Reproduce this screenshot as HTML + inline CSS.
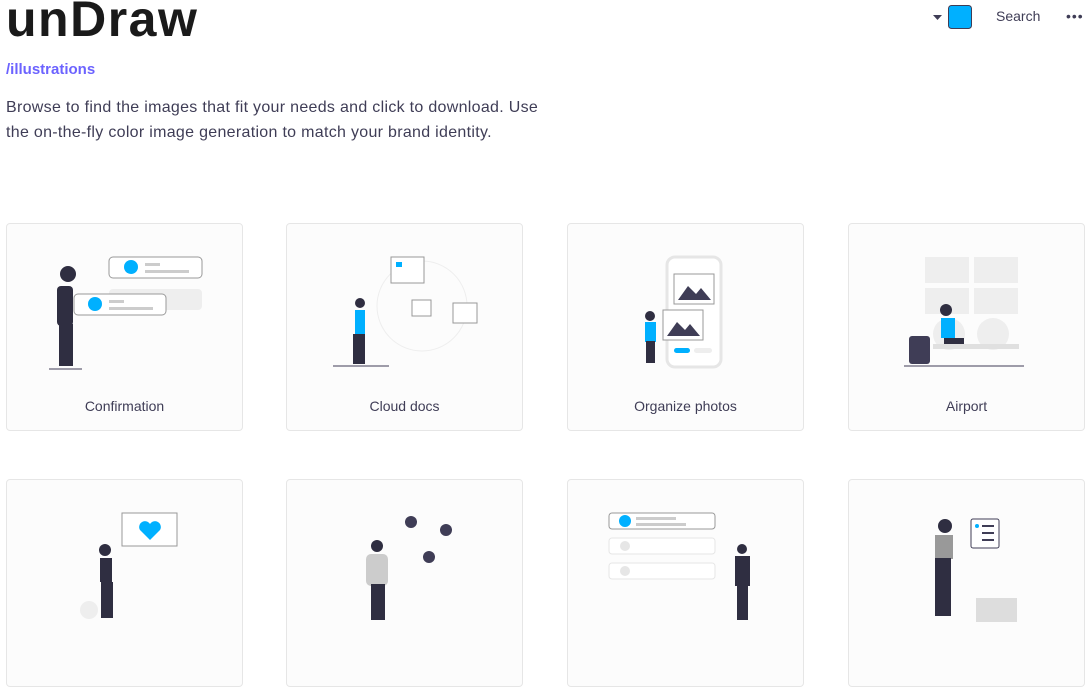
<!DOCTYPE html>
<html><head><meta charset="utf-8"><style>
*{margin:0;padding:0;box-sizing:border-box}
body{width:1091px;height:630px;overflow:hidden;background:#fff;font-family:"Liberation Sans",sans-serif;color:#3f3d56;position:relative}
.logo{position:absolute;left:6px;top:-10px;font-size:50px;font-weight:bold;color:#1a1a1a;letter-spacing:1.5px}
.sub{position:absolute;left:6px;top:61px;font-size:15px;font-weight:bold;color:#6c63ff}
.desc{position:absolute;left:6px;top:95px;font-size:16px;line-height:25px;color:#3f3d56;width:545px;letter-spacing:0.3px}
.card{position:absolute;width:237px;height:208px;border:1px solid #e6e6e6;border-radius:4px;background:#fcfcfc}
.card .t{position:absolute;left:0;right:0;top:174px;text-align:center;font-size:14px;color:#3f3d56}
.card svg{position:absolute;left:0;top:0}
</style></head><body>
<div class="logo">unDraw</div>
<div class="sub">/illustrations</div>
<div class="desc">Browse to find the images that fit your needs and click to download. Use<br>the on-the-fly color image generation to match your brand identity.</div>
<svg style="position:absolute;left:930px;top:4px" width="45" height="26"><path d="M3 11h9l-4.5 5z" fill="#3f3d56"/><rect x="18.5" y="1.5" width="23" height="23" rx="3" fill="#00b0ff" stroke="#3f3d56"/></svg>
<div style="position:absolute;left:996px;top:8px;font-size:14px;color:#3f3d56">Search</div>
<div style="position:absolute;left:1066px;top:8px;font-size:14px;color:#3f3d56;letter-spacing:1px">•••</div>

<div class="card" style="left:6px;top:223px"><svg width="237" height="208">
<rect x="102" y="33" width="93" height="21" rx="4" fill="#fff" stroke="#999"/><circle cx="124" cy="43" r="7" fill="#00b0ff"/><rect x="138" y="39" width="15" height="3" fill="#ccc"/><rect x="138" y="46" width="44" height="3" fill="#ccc"/>
<rect x="102" y="65" width="93" height="21" rx="4" fill="#eee"/>
<rect x="67" y="70" width="92" height="21" rx="4" fill="#fff" stroke="#999"/><circle cx="88" cy="80" r="7" fill="#00b0ff"/><rect x="102" y="76" width="15" height="3" fill="#ccc"/><rect x="102" y="83" width="44" height="3" fill="#ccc"/>
<circle cx="61" cy="50" r="8" fill="#2f2e41"/><rect x="50" y="62" width="16" height="40" rx="4" fill="#2f2e41"/><rect x="52" y="100" width="14" height="42" fill="#2f2e41"/><line x1="42" y1="145" x2="75" y2="145" stroke="#3f3d56"/>
</svg><div class="t">Confirmation</div></div>

<div class="card" style="left:286px;top:223px"><svg width="237" height="208">
<circle cx="135" cy="82" r="45" fill="none" stroke="#eee"/><rect x="104" y="33" width="33" height="26" fill="#fff" stroke="#999"/><rect x="109" y="38" width="6" height="5" fill="#00b0ff"/>
<rect x="125" y="76" width="19" height="16" fill="#fff" stroke="#999"/><rect x="166" y="79" width="24" height="20" fill="#fff" stroke="#999"/>
<circle cx="73" cy="79" r="5" fill="#2f2e41"/><rect x="68" y="86" width="10" height="26" fill="#00b0ff"/><rect x="66" y="110" width="12" height="30" fill="#2f2e41"/><line x1="46" y1="142" x2="102" y2="142" stroke="#3f3d56"/>
</svg><div class="t">Cloud docs</div></div>

<div class="card" style="left:567px;top:223px"><svg width="237" height="208">
<rect x="99" y="33" width="54" height="110" rx="8" fill="#fff" stroke="#e6e6e6" stroke-width="3"/><rect x="106" y="50" width="40" height="30" fill="#fff" stroke="#999"/><path d="M110 76l10-14 8 8 5-6 10 12z" fill="#3f3d56"/>
<rect x="95" y="86" width="40" height="30" fill="#fff" stroke="#999"/><path d="M99 112l10-14 8 8 5-6 10 12z" fill="#3f3d56"/><rect x="106" y="124" width="16" height="5" rx="2.5" fill="#00b0ff"/><rect x="126" y="124" width="18" height="5" rx="2.5" fill="#eee"/>
<circle cx="82" cy="92" r="5" fill="#2f2e41"/><rect x="77" y="98" width="11" height="20" fill="#00b0ff"/><rect x="78" y="117" width="9" height="22" fill="#2f2e41"/>
</svg><div class="t">Organize photos</div></div>

<div class="card" style="left:848px;top:223px"><svg width="237" height="208" fill="#eee">
<rect x="76" y="33" width="44" height="26"/><rect x="125" y="33" width="44" height="26"/><rect x="76" y="64" width="44" height="26"/><rect x="125" y="64" width="44" height="26"/>
<circle cx="100" cy="110" r="16"/><circle cx="144" cy="110" r="16"/><rect x="84" y="120" width="86" height="5" fill="#e0e0e0"/>
<rect x="60" y="112" width="21" height="28" rx="3" fill="#3f3d56"/><circle cx="97" cy="86" r="6" fill="#2f2e41"/><rect x="92" y="94" width="14" height="20" fill="#00b0ff"/><rect x="95" y="114" width="20" height="6" fill="#2f2e41"/><line x1="55" y1="142" x2="175" y2="142" stroke="#3f3d56"/>
</svg><div class="t">Airport</div></div>

<div class="card" style="left:6px;top:479px"><svg width="237" height="160">
<rect x="115" y="33" width="55" height="33" fill="#fff" stroke="#999"/><path d="M143 60l-10-10a5 5 0 0 1 10-6a5 5 0 0 1 10 6z" fill="#00b0ff"/>
<circle cx="98" cy="70" r="6" fill="#2f2e41"/><rect x="93" y="78" width="12" height="24" fill="#2f2e41"/><rect x="94" y="102" width="12" height="36" fill="#2f2e41"/><circle cx="82" cy="130" r="9" fill="#eee"/>
</svg></div>

<div class="card" style="left:286px;top:479px"><svg width="237" height="160">
<circle cx="124" cy="42" r="6" fill="#3f3d56"/><circle cx="159" cy="50" r="6" fill="#3f3d56"/><circle cx="142" cy="77" r="6" fill="#3f3d56"/>
<circle cx="90" cy="66" r="6" fill="#2f2e41"/><rect x="79" y="74" width="22" height="32" rx="5" fill="#ccc"/><rect x="84" y="104" width="14" height="36" fill="#2f2e41"/>
</svg></div>

<div class="card" style="left:567px;top:479px"><svg width="237" height="160">
<rect x="41" y="33" width="106" height="16" rx="3" fill="#fff" stroke="#999"/><circle cx="57" cy="41" r="6" fill="#00b0ff"/><rect x="68" y="37" width="40" height="3" fill="#ccc"/><rect x="68" y="43" width="50" height="3" fill="#ccc"/>
<rect x="41" y="58" width="106" height="16" rx="3" fill="#fff" stroke="#e6e6e6"/><circle cx="57" cy="66" r="5" fill="#e6e6e6"/>
<rect x="41" y="83" width="106" height="16" rx="3" fill="#fff" stroke="#e6e6e6"/><circle cx="57" cy="91" r="5" fill="#e6e6e6"/>
<circle cx="174" cy="69" r="5" fill="#2f2e41"/><rect x="167" y="76" width="15" height="30" fill="#2f2e41"/><rect x="169" y="104" width="11" height="36" fill="#2f2e41"/>
</svg></div>

<div class="card" style="left:848px;top:479px"><svg width="237" height="160">
<rect x="122" y="39" width="28" height="29" rx="2" fill="#fff" stroke="#3f3d56"/><circle cx="128" cy="46" r="2" fill="#00b0ff"/><rect x="133" y="45" width="12" height="2" fill="#3f3d56"/><rect x="133" y="52" width="12" height="2" fill="#3f3d56"/><rect x="133" y="59" width="12" height="2" fill="#3f3d56"/>
<circle cx="96" cy="46" r="7" fill="#2f2e41"/><rect x="86" y="55" width="18" height="24" fill="#999"/><rect x="86" y="78" width="16" height="58" fill="#2f2e41"/>
<rect x="127" y="118" width="41" height="24" fill="#ddd"/>
</svg></div>
</body></html>
